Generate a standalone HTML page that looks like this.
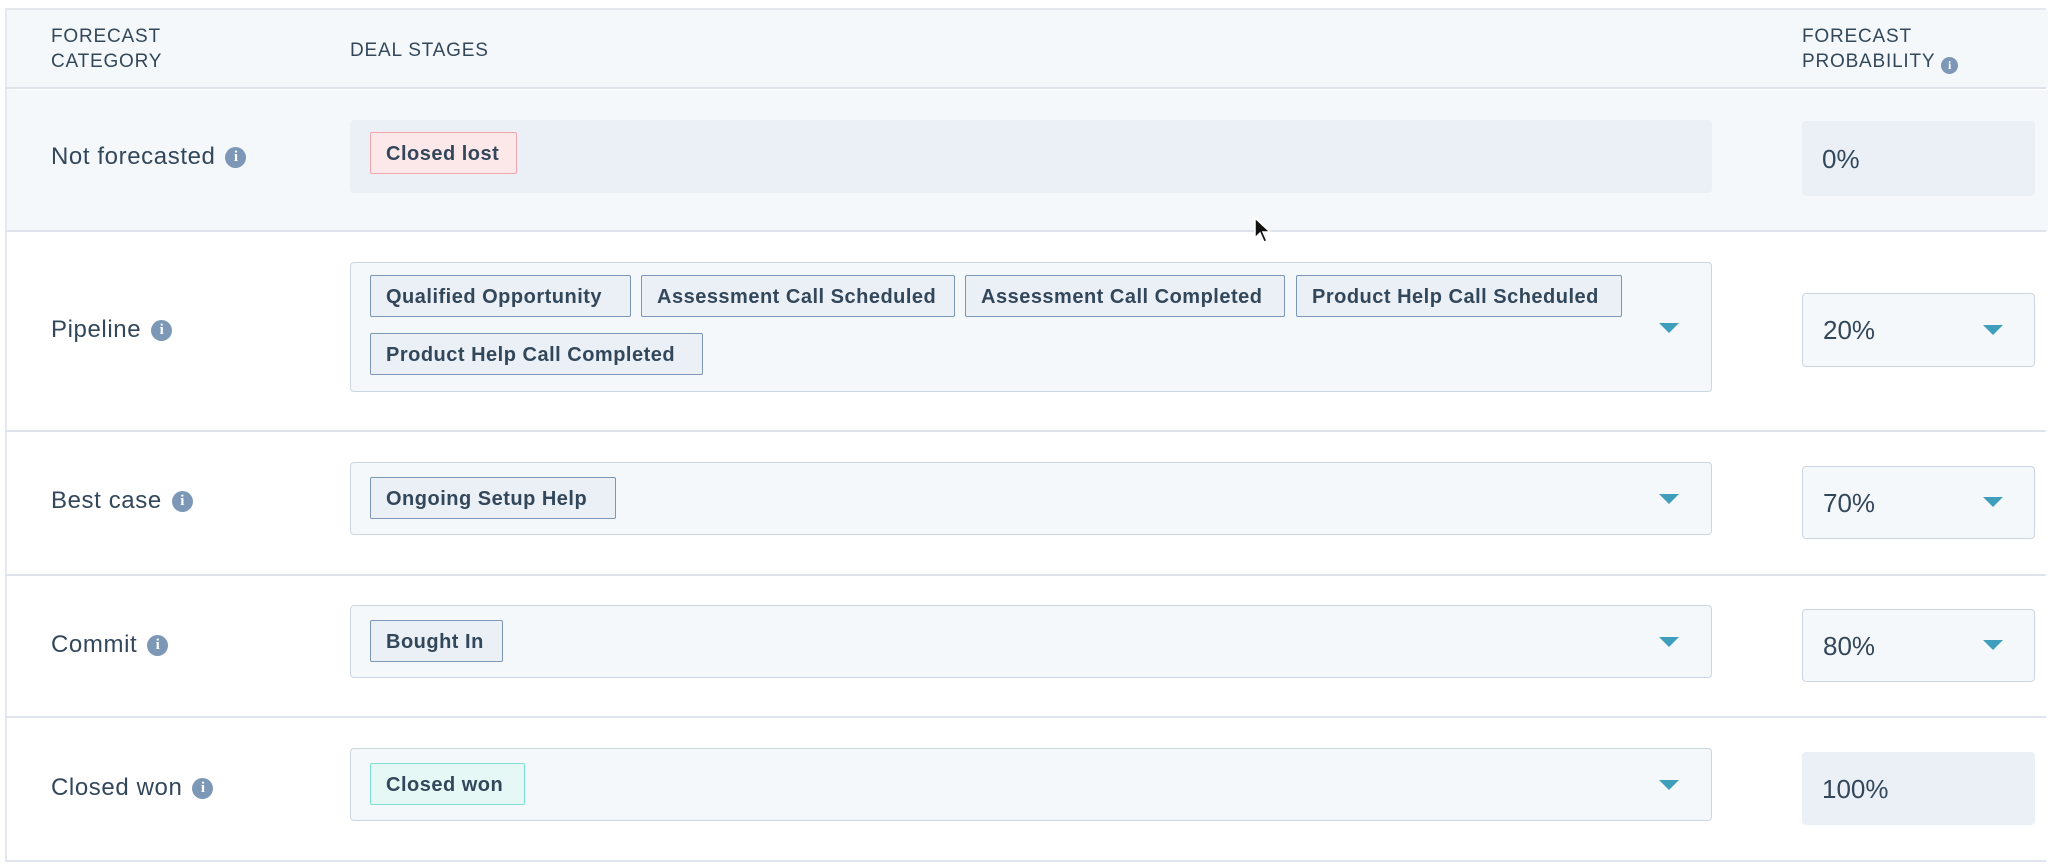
<!DOCTYPE html>
<html><head><meta charset="utf-8"><style>
*{margin:0;padding:0;box-sizing:border-box}
body{width:2048px;height:866px;background:#fff;font-family:"Liberation Sans",sans-serif;color:#33475b;position:relative;overflow:hidden}
.a{position:absolute}
.hdr{font-size:19px;line-height:25px;color:#33475b;letter-spacing:0.8px}
.lbl{font-size:24px;color:#33475b;display:flex;align-items:center;gap:10px;letter-spacing:0.6px}
.i{display:inline-block;width:21px;height:21px;border-radius:50%;background:#7c98b6;color:#fff;font:bold 15px/21px "Liberation Serif",serif;text-align:center;letter-spacing:0}
.box{border:1px solid #cbd6e2;border-radius:4px;background:#f5f8fa}
.tag{position:absolute;height:42px;border:1.5px solid #7c98b6;background:#eaf0f6;font-weight:bold;font-size:20px;line-height:39px;padding:2px 15px 0;color:#33475b;white-space:nowrap;border-radius:2px;letter-spacing:0.5px}
.car{position:absolute;width:0;height:0;border-left:10px solid transparent;border-right:10px solid transparent;border-top:10px solid #3f9ebb}
.pv{font-size:26px;color:#33475b;position:absolute;left:20px}
.line{position:absolute;left:5px;width:2041px;height:2px;background:#dfe3eb}
</style></head><body>
<div class="a" style="left:5px;top:8px;width:2041px;height:854px;border:2px solid #e5e9ef;border-right:none"></div>
<div class="a" style="left:7px;top:10px;width:2041px;height:78px;background:#f5f8fa"></div>
<div class="a" style="left:7px;top:90px;width:2041px;height:141px;background:#f5f8fa"></div>
<div class="line" style="top:87px"></div>
<div class="line" style="top:230px"></div>
<div class="line" style="top:430px"></div>
<div class="line" style="top:574px"></div>
<div class="line" style="top:716px"></div>
<div class="line" style="top:860px"></div>

<div class="a hdr" style="left:51px;top:24px">FORECAST<br>CATEGORY</div>
<div class="a hdr" style="left:350px;top:38px">DEAL STAGES</div>
<div class="a hdr" style="left:1802px;top:24px">FORECAST<br>PROBABILITY <span class="i" style="width:17px;height:17px;font-size:12px;line-height:17px;vertical-align:-2px">i</span></div>

<!-- row1 -->
<div class="a lbl" style="left:51px;top:143px">Not forecasted <span class="i">i</span></div>
<div class="a" style="left:350px;top:120px;width:1362px;height:73px;background:#eaf0f6;border-radius:4px"></div>
<div class="tag" style="left:370px;top:132px;width:147px;background:#fde8e9;border-color:#f2a7ad">Closed lost</div>
<div class="a" style="left:1802px;top:121px;width:233px;height:75px;background:#eaf0f6;border-radius:4px"><span class="pv" style="top:23px">0%</span></div>

<!-- row2 -->
<div class="a lbl" style="left:51px;top:316px">Pipeline <span class="i">i</span></div>
<div class="a box" style="left:350px;top:262px;width:1362px;height:130px"></div>
<div class="tag" style="left:370px;top:275px;width:261px">Qualified Opportunity</div>
<div class="tag" style="left:641px;top:275px;width:314px">Assessment Call Scheduled</div>
<div class="tag" style="left:965px;top:275px;width:320px">Assessment Call Completed</div>
<div class="tag" style="left:1296px;top:275px;width:326px">Product Help Call Scheduled</div>
<div class="tag" style="left:370px;top:333px;width:333px">Product Help Call Completed</div>
<div class="car" style="left:1659px;top:323px"></div>
<div class="a box" style="left:1802px;top:293px;width:233px;height:74px"><span class="pv" style="top:21px">20%</span><div class="car" style="left:180px;top:31px"></div></div>

<!-- row3 -->
<div class="a lbl" style="left:51px;top:487px">Best case <span class="i">i</span></div>
<div class="a box" style="left:350px;top:462px;width:1362px;height:73px"></div>
<div class="tag" style="left:370px;top:477px;width:246px">Ongoing Setup Help</div>
<div class="car" style="left:1659px;top:494px"></div>
<div class="a box" style="left:1802px;top:466px;width:233px;height:73px"><span class="pv" style="top:21px">70%</span><div class="car" style="left:180px;top:30px"></div></div>

<!-- row4 -->
<div class="a lbl" style="left:51px;top:631px">Commit <span class="i">i</span></div>
<div class="a box" style="left:350px;top:605px;width:1362px;height:73px"></div>
<div class="tag" style="left:370px;top:620px;width:133px">Bought In</div>
<div class="car" style="left:1659px;top:637px"></div>
<div class="a box" style="left:1802px;top:609px;width:233px;height:73px"><span class="pv" style="top:21px">80%</span><div class="car" style="left:180px;top:30px"></div></div>

<!-- row5 -->
<div class="a lbl" style="left:51px;top:774px">Closed won <span class="i">i</span></div>
<div class="a box" style="left:350px;top:748px;width:1362px;height:73px"></div>
<div class="tag" style="left:370px;top:763px;width:155px;background:#e5f8f6;border-color:#7fded2">Closed won</div>
<div class="car" style="left:1659px;top:780px"></div>
<div class="a" style="left:1802px;top:752px;width:233px;height:73px;background:#eaf0f6;border-radius:4px"><span class="pv" style="top:22px">100%</span></div>

<svg class="a" style="left:1253px;top:216px" width="22" height="30" viewBox="0 0 22 30"><path d="M2 2 L2 22 L7 17 L11 26 L14 25 L10 16 L17 16 Z" fill="#111" stroke="#fff" stroke-width="1.5"/></svg>
</body></html>
